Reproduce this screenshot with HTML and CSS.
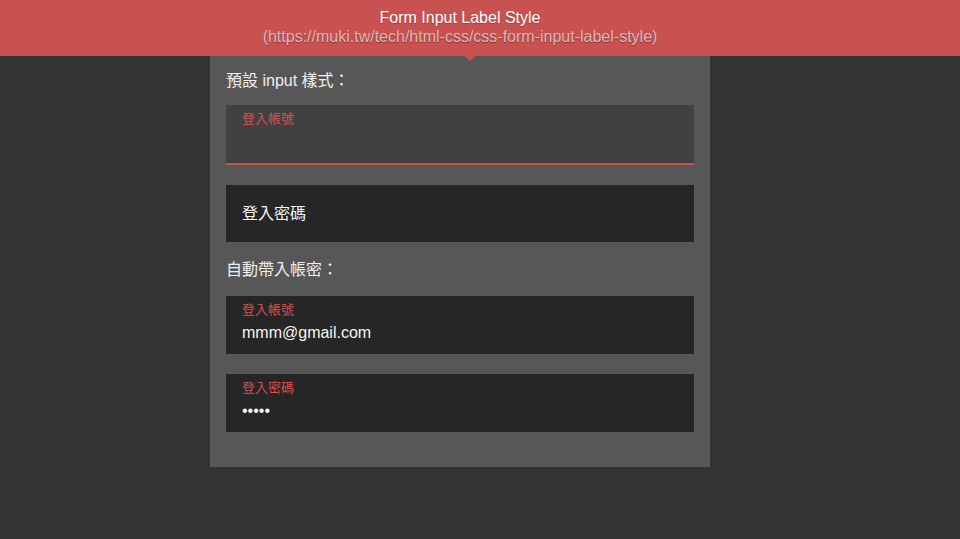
FILE: index.html
```html
<!DOCTYPE html>
<html lang="zh-TW">
<head>
    <meta charset="UTF-8">
    <meta name="viewport" content="width=device-width, initial-scale=1.0">
    <title>Form Input Label Style</title>
    <link rel="stylesheet" href="styles.css">
</head>
<body>
    <header class="banner">
        <div class="banner-title">Form Input Label Style</div>
        <div class="banner-link">(https://muki.tw/tech/html-css/css-form-input-label-style)</div>
    </header>

    <main class="panel">
        <h2 class="section-title">預設 input 樣式：</h2>

        <div class="field is-focus">
            <label class="field-label" for="acc1">登入帳號</label>
            <input class="field-input" id="acc1" type="text">
        </div>

        <div class="field is-empty">
            <label class="field-label" for="pwd1">登入密碼</label>
            <input class="field-input" id="pwd1" type="password">
        </div>

        <h2 class="section-title">自動帶入帳密：</h2>

        <div class="field">
            <label class="field-label" for="acc2">登入帳號</label>
            <input class="field-input" id="acc2" type="text" value="mmm@gmail.com">
        </div>

        <div class="field">
            <label class="field-label" for="pwd2">登入密碼</label>
            <input class="field-input" id="pwd2" type="password" value="12345">
        </div>
    </main>
</body>
</html>
```

FILE: styles.css
```css
* {
    margin: 0;
    padding: 0;
    box-sizing: border-box;
}

body {
    font-family: "Liberation Sans", "Noto Sans CJK TC", sans-serif;
    background-color: #333333;
    min-height: 100vh;
}

/* 頂部標題列 */
.banner {
    position: relative;
    height: 56px;
    padding: 8px 40px 0 0;
    background-color: #c95150;
    text-align: center;
    font-size: 16px;
    line-height: 19px;
}

.banner::after {
    content: "";
    position: absolute;
    left: 465px;
    bottom: -5px;
    border-left: 5px solid transparent;
    border-right: 5px solid transparent;
    border-top: 5px solid #c95150;
}

.banner-title {
    color: #ffffff;
    text-shadow: 0 1px 1px rgba(0, 0, 0, 0.25);
}

.banner-link {
    color: #dcb8b8;
    text-shadow: 0 1px 1px rgba(0, 0, 0, 0.35);
}

/* 表單區塊 */
.panel {
    width: 500px;
    margin-left: 210px;
    padding: 13px 16px 35px;
    background-color: #575757;
}

.section-title {
    font-size: 16px;
    font-weight: normal;
    line-height: 24px;
    color: #f0f0f0;
    margin-bottom: 12px;
}

.field + .section-title {
    margin-top: 16px;
    margin-bottom: 14px;
}

.field {
    position: relative;
    height: 58px;
    padding: 5px 16px 0;
    background-color: #262626;
}

.field + .field {
    margin-top: 20px;
}

.field-label {
    display: block;
    font-size: 13px;
    line-height: 17px;
    color: #d9504d;
}

.field-input {
    display: block;
    width: 100%;
    margin-top: 4px;
    border: none;
    outline: none;
    background: transparent;
    color: #f5f5f5;
    font-family: inherit;
    font-size: 16px;
    line-height: 22px;
    height: 22px;
}

.field.is-focus {
    height: 60px;
    background-color: #414141;
    border-bottom: 2px solid #c95150;
}

/* 尚未輸入時，label 當作提示文字 */
.field.is-empty {
    height: 57px;
}

.field.is-empty .field-label {
    position: absolute;
    left: 16px;
    top: 18px;
    font-size: 16px;
    line-height: 22px;
    color: #f5f5f5;
}
```
